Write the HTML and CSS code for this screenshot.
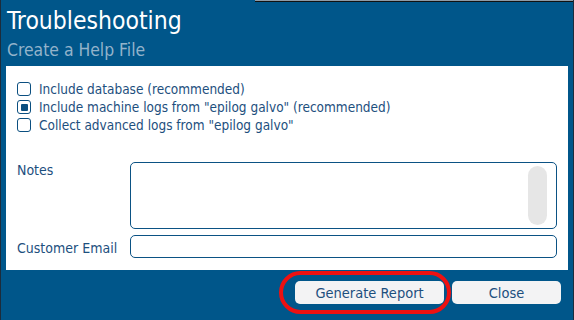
FILE: index.html
```html
<!DOCTYPE html>
<html>
<head>
<meta charset="utf-8">
<link rel="stylesheet" href="styles.css">
</head>
<body>
<div class="window">
  <div class="topstrip"><div class="ts-blue"></div><div class="ts-other"></div></div>
  <div class="header">
    <div class="title">Troubleshooting</div>
    <div class="subtitle">Create a Help File</div>
  </div>
  <div class="panel">
    <div class="checks">
      <label class="check"><span class="box"></span><span>Include database (recommended)</span></label>
      <label class="check"><span class="box checked"></span><span>Include machine logs from "epilog galvo" (recommended)</span></label>
      <label class="check"><span class="box"></span><span>Collect advanced logs from "epilog galvo"</span></label>
    </div>
    <div class="field notes">
      <div class="flabel">Notes</div>
      <div class="textarea"><div class="scroll"></div></div>
    </div>
    <div class="field email">
      <div class="flabel">Customer Email</div>
      <div class="input"></div>
    </div>
  </div>
  <div class="footer">
    <div class="btnwrap highlight">
      <button class="btn gen">Generate Report</button>
    </div>
    <button class="btn close">Close</button>
  </div>
</div>
</body>
</html>
```

FILE: styles.css
```css
html, body {
  margin: 0;
  padding: 0;
}
body {
  width: 574px;
  height: 320px;
  overflow: hidden;
  background: #00568a;
  font-family: "DejaVu Sans Condensed", "DejaVu Sans", sans-serif;
}
.window {
  width: 574px;
  height: 320px;
  box-sizing: border-box;
  background: #00568a;
  border-left: 1px solid #1c2c3c;
  border-right: 1px solid #1c2c3c;
  display: flex;
  flex-direction: column;
}
.topstrip {
  display: flex;
  height: 2px;
}
.ts-blue {
  width: 254px;
}
.ts-other {
  flex: 1;
  background: #8e9aa6;
  border-bottom: 1px solid #111;
  height: 1px;
}
.header {
  height: 64px;
  padding-left: 6px;
  box-sizing: border-box;
}
.title {
  color: #ffffff;
  font-size: 24.5px;
  line-height: 26px;
  margin-top: 6px;
}
.subtitle {
  color: #93b3ca;
  font-size: 17.4px;
  line-height: 20px;
  margin-top: 6px;
}
.panel {
  margin-left: 5px;
  width: 562px;
  height: 204px;
  background: #ffffff;
  box-sizing: border-box;
  padding: 16px 11px 0 11px;
}
.checks {
  display: flex;
  flex-direction: column;
  gap: 4px;
}
.check {
  display: flex;
  align-items: center;
  height: 14px;
  gap: 8px;
  color: #1d4f7e;
  font-size: 13.5px;
}
.box {
  width: 14px;
  height: 14px;
  box-sizing: border-box;
  border: 1.5px solid #0b4f80;
  border-radius: 3px;
  display: flex;
  align-items: center;
  justify-content: center;
  flex: none;
}
.box.checked::after {
  content: "";
  width: 7px;
  height: 7px;
  background: #0b4f80;
  border-radius: 1px;
}
.field {
  display: flex;
}
.flabel {
  width: 113px;
  color: #1d4f7e;
  font-size: 14px;
  flex: none;
}
.notes {
  margin-top: 30px;
  height: 67px;
}
.textarea {
  flex: 1;
  box-sizing: border-box;
  border: 1.5px solid #0b5284;
  border-radius: 5px;
  display: flex;
  justify-content: flex-end;
  padding: 3px 9px 3px 0;
}
.scroll {
  width: 19px;
  background: #e6e6e6;
  border-radius: 10px;
}
.email {
  margin-top: 6px;
  height: 23px;
  align-items: center;
}
.email .flabel {
  padding-top: 2px;
}
.input {
  flex: 1;
  height: 23px;
  box-sizing: border-box;
  border: 1.5px solid #0b5284;
  border-radius: 5px;
}
.footer {
  display: flex;
  justify-content: flex-end;
  align-items: center;
  padding-right: 12px;
  margin-top: -3px;
  height: 51px;
}
.btnwrap.highlight {
  border: 4px solid #ee1111;
  border-radius: 22px;
  height: 43px;
  box-sizing: border-box;
  padding: 0 3px 0 12px;
  display: flex;
  align-items: center;
}
.btn {
  height: 23px;
  background: #f3f3f4;
  border: none;
  border-radius: 5px;
  color: #1d4f7e;
  font-family: "DejaVu Sans Condensed", "DejaVu Sans", sans-serif;
  font-size: 14.5px;
  padding: 0;
  margin: 0;
}
.gen {
  width: 149px;
}
.close {
  width: 109px;
  margin-left: 1px;
}
```
